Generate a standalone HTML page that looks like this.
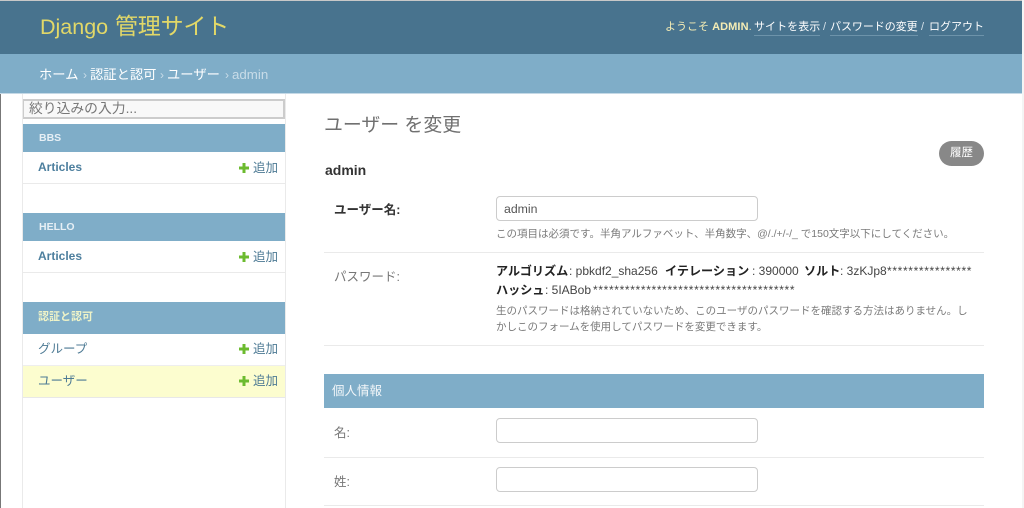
<!DOCTYPE html>
<html lang="ja"><head><meta charset="utf-8"><title>ユーザー を変更</title>
<style>
html,body{margin:0;padding:0;background:#fff}
body{position:relative;width:1024px;height:508px;overflow:hidden;font-family:"Liberation Sans","Noto Sans CJK JP",sans-serif;color:#333}
.a{position:absolute;white-space:nowrap;line-height:1}
.b{position:absolute}
.add{color:#4d7a94;font-size:12.5px}
.plus{position:absolute;width:10px;height:10px}
.help{color:#7a7a7a;font-size:10.5px}
.lab{color:#777;font-size:12.5px}
.inp{position:absolute;left:496px;width:260px;height:23px;border:1px solid #ccc;border-radius:4px;background:#fff}
.sec{position:absolute;background:#7fadc8}
.ln{position:absolute;height:1px;background:#eaeaea}
.pw{font-size:12px;color:#444}
.pb{font-size:12.1px;font-weight:bold;color:#222}
.st{letter-spacing:.65px}
</style></head><body>
<div class="b" style="left:0;top:0;width:1024px;height:1px;background:#c8c8c8"></div>
<div class="b" style="left:0;top:1px;width:1022px;height:53px;background:#48738e"></div>
<div class="b" style="left:0;top:54px;width:1022px;height:39px;background:#7fadc8"></div>
<div class="b" style="left:0;top:93px;width:1022px;height:1px;background:#c5d9e6"></div>
<div class="b" style="left:0;top:94px;width:1px;height:414px;background:#777"></div>
<div class="b" style="left:1022px;top:0;width:2px;height:508px;background:#f4f4f4"></div>

<div class="a" style="left:40px;top:17px;font-size:21.5px;color:#e2d868">Django</div>
<div class="a" style="left:115px;top:15px;font-size:23px;color:#e2d868;letter-spacing:-.2px">管理サイト</div>
<div class="a" style="left:665px;top:22px;font-size:11px;color:#f5edb5">ようこそ <b style="letter-spacing:.1px">ADMIN</b>.</div>
<div class="a" style="left:754px;top:22px;font-size:11px;color:#fff;letter-spacing:.05px;border-bottom:1px solid #6d93aa;padding-bottom:2px">サイトを表示</div>
<div class="a" style="left:823px;top:22px;font-size:11px;color:#d5e2ea">/</div>
<div class="a" style="left:830px;top:22px;font-size:11px;color:#fff;letter-spacing:-.05px;border-bottom:1px solid #6d93aa;padding-bottom:2px">パスワードの変更</div>
<div class="a" style="left:921px;top:22px;font-size:11px;color:#d5e2ea">/</div>
<div class="a" style="left:929px;top:22px;font-size:11px;color:#fff;border-bottom:1px solid #6d93aa;padding-bottom:2px">ログアウト</div>

<div class="a" style="left:39px;top:68px;font-size:13.3px;color:#fff">ホーム</div>
<div class="a" style="left:83px;top:69px;font-size:12px;color:#c8dce8">›</div>
<div class="a" style="left:90px;top:68px;font-size:13.3px;color:#fff">認証と認可</div>
<div class="a" style="left:160px;top:69px;font-size:12px;color:#c8dce8">›</div>
<div class="a" style="left:167px;top:68px;font-size:13.3px;color:#fff">ユーザー</div>
<div class="a" style="left:225px;top:69px;font-size:12px;color:#c8dce8">›</div>
<div class="a" style="left:232px;top:68px;font-size:13.3px;color:#c8dce8">admin</div>

<div class="b" style="left:22px;top:94px;width:1px;height:414px;background:#eaeaea"></div>
<div class="b" style="left:285px;top:94px;width:1px;height:414px;background:#eaeaea"></div>
<div class="b" style="left:23px;top:99px;width:259px;height:16px;border:solid #ccc;border-width:2px 2px 2px 1px;background:#f8f8f8"></div>
<div class="a" style="left:29px;top:102px;font-size:13.8px;color:#777">絞り込みの入力...</div>

<div class="sec" style="left:23px;top:124px;width:262px;height:28px"></div>
<div class="a" style="left:39px;top:133px;font-size:10.5px;font-weight:bold;color:#e6eff5">BBS</div>
<div class="a" style="left:38px;top:161px;font-size:12px;font-weight:bold;color:#4d7f9e">Articles</div>
<svg class="plus" style="left:239px;top:163px" viewBox="0 0 10 10"><path d="M5 0v10M0 5h10" stroke="#6cbb2f" stroke-width="3"/></svg>
<div class="a add" style="left:253px;top:162px">追加</div>
<div class="ln" style="left:23px;top:183px;width:262px"></div>

<div class="sec" style="left:23px;top:213px;width:262px;height:28px"></div>
<div class="a" style="left:39px;top:222px;font-size:10.5px;font-weight:bold;color:#e6eff5">HELLO</div>
<div class="a" style="left:38px;top:250px;font-size:12px;font-weight:bold;color:#4d7f9e">Articles</div>
<svg class="plus" style="left:239px;top:252px" viewBox="0 0 10 10"><path d="M5 0v10M0 5h10" stroke="#6cbb2f" stroke-width="3"/></svg>
<div class="a add" style="left:253px;top:251px">追加</div>
<div class="ln" style="left:23px;top:272px;width:262px"></div>

<div class="sec" style="left:23px;top:302px;width:262px;height:32px"></div>
<div class="a" style="left:38px;top:312px;font-size:11px;font-weight:bold;color:#eef3c8">認証と認可</div>
<div class="a" style="left:38px;top:343px;font-size:12.5px;color:#4d7a94">グループ</div>
<svg class="plus" style="left:239px;top:344px" viewBox="0 0 10 10"><path d="M5 0v10M0 5h10" stroke="#6cbb2f" stroke-width="3"/></svg>
<div class="a add" style="left:253px;top:343px">追加</div>
<div class="b" style="left:23px;top:365px;width:262px;height:31px;background:#fcfdcf;border-top:1px solid #eee;border-bottom:1px solid #e8e8e8"></div>
<div class="a" style="left:38px;top:375px;font-size:12.5px;color:#4d7a94">ユーザー</div>
<svg class="plus" style="left:239px;top:376px" viewBox="0 0 10 10"><path d="M5 0v10M0 5h10" stroke="#6cbb2f" stroke-width="3"/></svg>
<div class="a add" style="left:253px;top:375px">追加</div>

<div class="a" style="left:324px;top:117px;font-size:18.9px;color:#707070">ユーザー を変更</div>
<div class="a" style="left:325px;top:163px;font-size:14px;font-weight:bold;color:#333">admin</div>
<div class="b" style="left:939px;top:141px;width:45px;height:25px;border-radius:13px;background:#888"></div>
<div class="a" style="left:950px;top:148px;font-size:11.5px;color:#fff">履歴</div>

<div class="a" style="left:334px;top:204px;font-size:12.5px;font-weight:bold;color:#333">ユーザー名:</div>
<div class="inp" style="top:196px"></div>
<div class="a" style="left:504px;top:203px;font-size:12.3px;color:#555">admin</div>
<div class="a help" style="left:496px;top:229px">この項目は必須です。半角アルファベット、半角数字、@/./+/-/_ で150文字以下にしてください。</div>
<div class="ln" style="left:324px;top:252px;width:660px"></div>

<div class="a lab" style="left:334px;top:271px">パスワード:</div>
<div class="a pb" style="left:496px;top:265px">アルゴリズム</div>
<div class="a pw" style="left:569px;top:265px">: pbkdf2_sha256</div>
<div class="a pb" style="left:665px;top:265px">イテレーション</div>
<div class="a pw" style="left:752px;top:265px">: 390000</div>
<div class="a pb" style="left:804px;top:265px">ソルト</div>
<div class="a pw" style="left:840px;top:265px">: 3zKJp8</div>
<div class="a pw st" style="left:887px;top:265px">****************</div>
<div class="a pb" style="left:496px;top:284px">ハッシュ</div>
<div class="a pw" style="left:545px;top:284px">: 5IABob</div>
<div class="a pw st" style="left:593px;top:284px">**************************************</div>
<div class="a help" style="left:496px;top:306px">生のパスワードは格納されていないため、このユーザのパスワードを確認する方法はありません。し</div>
<div class="a help" style="left:496px;top:322px">かしこのフォームを使用してパスワードを変更できます。</div>
<div class="ln" style="left:324px;top:345px;width:660px"></div>

<div class="sec" style="left:324px;top:374px;width:660px;height:34px"></div>
<div class="a" style="left:332px;top:385px;font-size:12.5px;color:#f2f6f9">個人情報</div>
<div class="a lab" style="left:334px;top:427px">名:</div>
<div class="inp" style="top:418px"></div>
<div class="ln" style="left:324px;top:457px;width:660px"></div>
<div class="a lab" style="left:334px;top:476px">姓:</div>
<div class="inp" style="top:467px"></div>
<div class="ln" style="left:324px;top:505px;width:660px"></div>
</body></html>
